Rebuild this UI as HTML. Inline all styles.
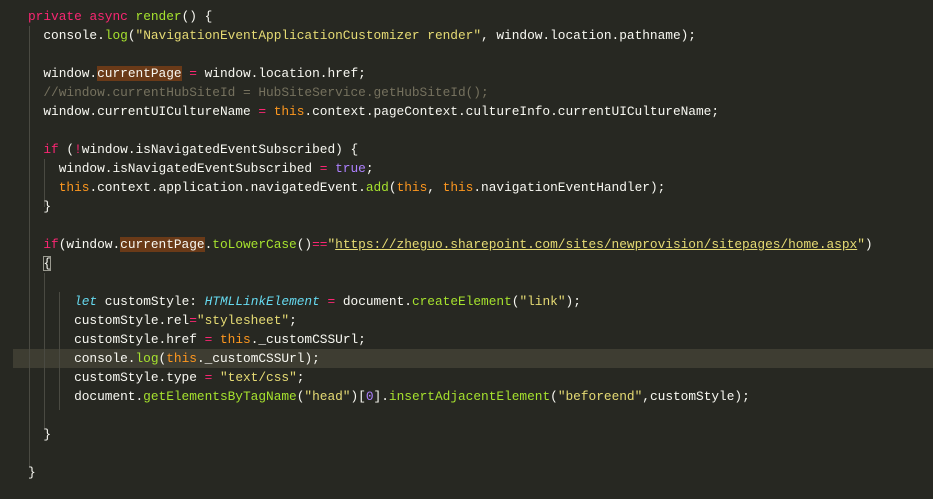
<!DOCTYPE html>
<html><head><style>
body{margin:0;width:933px;height:499px;background:#272822;overflow:hidden;position:relative;font-family:"Liberation Mono",monospace;font-size:12.85px;letter-spacing:-0.03px;color:#f8f8f2}
.l{position:absolute;left:28px;height:19px;line-height:19px;white-space:pre}
.k{color:#f92672}.f{color:#a6e22e}.s{color:#e6db74}.t{color:#fd971f}.c{color:#75715e}.i{color:#66d9ef;font-style:italic}
.h{background:#6a3a18}
.u{text-decoration:underline;text-decoration-color:#e6db74}
.g{position:absolute;width:1px;background:#4a4a42}
.cur{position:absolute;left:13px;right:0;top:349px;height:19px;background:#3e3d32}
.b{outline:1px solid #9a9a90;outline-offset:-1px}
</style></head><body>
<div class="cur"></div>
<div class="g" style="left:29px;top:26px;height:440px"></div>
<div class="g" style="left:44px;top:159px;height:48px"></div>
<div class="g" style="left:44px;top:273px;height:157px"></div>
<div class="g" style="left:59px;top:292px;height:118px"></div>
<div class="l" style="top:7px"><span class="k">private</span> <span class="k">async</span> <span class="f">render</span>() {</div>
<div class="l" style="top:26px">  console.<span class="f">log</span>(<span class="s">"NavigationEventApplicationCustomizer render"</span>, window.location.pathname);</div>
<div class="l" style="top:64px">  window.<span class="h">currentPage</span> <span class="k">=</span> window.location.href;</div>
<div class="l" style="top:83px">  <span class="c">//window.currentHubSiteId = HubSiteService.getHubSiteId();</span></div>
<div class="l" style="top:102px">  window.currentUICultureName <span class="k">=</span> <span class="t">this</span>.context.pageContext.cultureInfo.currentUICultureName;</div>
<div class="l" style="top:140px">  <span class="k">if</span> (<span class="k">!</span>window.isNavigatedEventSubscribed) {</div>
<div class="l" style="top:159px">    window.isNavigatedEventSubscribed <span class="k">=</span> <span style="color:#ae81ff">true</span>;</div>
<div class="l" style="top:178px">    <span class="t">this</span>.context.application.navigatedEvent.<span class="f">add</span>(<span class="t">this</span>, <span class="t">this</span>.navigationEventHandler);</div>
<div class="l" style="top:197px">  }</div>
<div class="l" style="top:235px">  <span class="k">if</span>(window.<span class="h">currentPage</span>.<span class="f">toLowerCase</span>()<span class="k">==</span><span class="s">"<span class="u">https://zheguo.sharepoint.com/sites/newprovision/sitepages/home.aspx</span>"</span>)</div>
<div class="l" style="top:254px">  <span class="b">{</span></div>
<div class="l" style="top:292px">      <span class="i">let</span> customStyle: <span class="i">HTMLLinkElement</span> <span class="k">=</span> document.<span class="f">createElement</span>(<span class="s">"link"</span>);</div>
<div class="l" style="top:311px">      customStyle.rel<span class="k">=</span><span class="s">"stylesheet"</span>;</div>
<div class="l" style="top:330px">      customStyle.href <span class="k">=</span> <span class="t">this</span>._customCSSUrl;</div>
<div class="l" style="top:349px">      console.<span class="f">log</span>(<span class="t">this</span>._customCSSUrl);</div>
<div class="l" style="top:368px">      customStyle.type <span class="k">=</span> <span class="s">"text/css"</span>;</div>
<div class="l" style="top:387px">      document.<span class="f">getElementsByTagName</span>(<span class="s">"head"</span>)[<span style="color:#ae81ff">0</span>].<span class="f">insertAdjacentElement</span>(<span class="s">"beforeend"</span>,customStyle);</div>
<div class="l" style="top:425px">  }</div>
<div class="l" style="top:463px">}</div>
</body></html>
